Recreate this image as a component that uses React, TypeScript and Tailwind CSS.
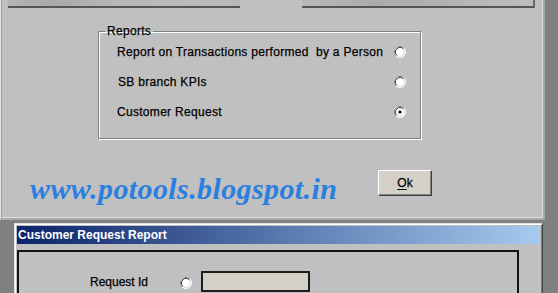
import React from "react";

function Radio({ checked = false }: { checked?: boolean }) {
  return (
    <svg width="12" height="12" viewBox="0 0 12 12" className="block shrink-0">
      <circle cx="6" cy="6" r="5.5" fill="#ffffff" stroke="#ffffff" strokeWidth="1" />
      <path d="M2.11 9.89 A5.5 5.5 0 0 1 9.89 2.11" fill="none" stroke="#808080" strokeWidth="1" />
      <circle cx="6" cy="6" r="4.5" fill="none" stroke="#d4d0c8" strokeWidth="1" />
      <path d="M2.82 9.18 A4.5 4.5 0 0 1 9.18 2.82" fill="none" stroke="#404040" strokeWidth="1" />
      <circle cx="6" cy="6" r="3.8" fill="#ffffff" />
      {checked && <circle cx="6" cy="6" r="1.6" fill="#000000" />}
    </svg>
  );
}

export default function App() {
  return (
    <div className="w-[558px] h-[293px] overflow-hidden bg-[#808080] font-['Liberation_Sans',Arial,sans-serif] text-[12px] text-black flex flex-col">
      {/* Main dialog panel */}
      <div className="w-[545px] h-[220px] shrink-0 bg-[#c0c0c0] border-l border-l-[#e4e4e4] border-r-2 border-r-[#a8a8a8] border-b-2 border-b-[#a8a8a8] shadow-[inset_1px_0_0_#a0a0a0,inset_-1px_-1px_0_#e0e0e0] flex flex-col">
        {/* top cut-off panels */}
        <div className="h-[8px] flex shrink-0">
          <div className="ml-[7px] w-[232px] h-[8px] border-b-2 border-b-[#555555] bg-[linear-gradient(to_right,#b4b4b4,#a9a9a9_20%,#b6b6b6_45%,#bcbcbc_80%,#b8b8b8)]" />
          <div className="ml-[62px] w-[233px] h-[8px] border-b-2 border-b-[#555555] border-r-2 border-r-[#666666] bg-[linear-gradient(to_right,#b9b9b9,#ababab_30%,#b0b0b0_55%,#b9b9b9_80%,#bdbdbd)]" />
        </div>

        {/* Reports group box */}
        <fieldset className="ml-[97px] mt-[16px] w-[323px] h-[115px] border border-[#808080] shadow-[1px_1px_0_#ffffff,inset_1px_1px_0_#ffffff] shrink-0 tracking-[0.3px] [-webkit-text-stroke:0.25px_#000]">
          <legend className="ml-[6px] px-[2px] leading-[14px]">Reports</legend>
          <div className="-mt-[1px] pl-[18px] pr-[14px] flex flex-col">
            <div className="h-[30px] flex items-center justify-between">
              <span className="whitespace-pre">Report on Transactions performed  by a Person</span>
              <Radio />
            </div>
            <div className="h-[30px] flex items-center justify-between">
              <span className="pl-[1px]">SB branch KPIs</span>
              <Radio />
            </div>
            <div className="h-[30px] flex items-center justify-between">
              <span>Customer Request</span>
              <Radio checked />
            </div>
          </div>
        </fieldset>

        {/* watermark + Ok */}
        <div className="flex items-start">
          <div className="ml-[29px] mt-[32px] w-[348px] font-['Liberation_Serif',serif] italic font-bold text-[30px] tracking-[0.4px] leading-[36px] text-[#2a7fe0] whitespace-nowrap">
            www.potools.blogspot.in
          </div>
          <button className="mt-[31px] w-[54px] h-[26px] bg-[#d4d0c8] border border-t-white border-l-white border-r-[#404040] border-b-[#404040] shadow-[inset_-1px_-1px_0_#808080] flex items-center justify-center leading-none [-webkit-text-stroke:0.25px_#000]">
            <span>
              <span className="underline underline-offset-2">O</span>k
            </span>
          </button>
        </div>
      </div>

      {/* Customer Request Report window */}
      <div className="ml-[14px] mt-[3px] w-[529px] flex-1 bg-[#c0c0c0] border-t border-l border-t-[#e0e0e0] border-l-[#e0e0e0] border-r border-b border-r-[#404040] border-b-[#404040] shadow-[inset_1px_1px_0_#ffffff,inset_-1px_-1px_0_#808080] p-[2px] flex flex-col">
        <div className="h-[18px] shrink-0 bg-[linear-gradient(to_right,#0a246a,#a6caf0)] text-white font-bold leading-[18px] pl-[1px]">
          Customer Request Report
        </div>
        <div className="mt-[6px] w-[502px] h-[100px] border-2 border-[#111111]">
          <div className="mt-[19px] flex items-center pl-[71px]">
            <span className="w-[90px] [-webkit-text-stroke:0.25px_#000]">Request Id</span>
            <div className="mt-[2px]">
              <Radio />
            </div>
            <div className="ml-[9px] w-[109px] h-[21px] bg-[#d4d0c8] border-2 border-[#1c1c1c]" />
          </div>
        </div>
      </div>
    </div>
  );
}
